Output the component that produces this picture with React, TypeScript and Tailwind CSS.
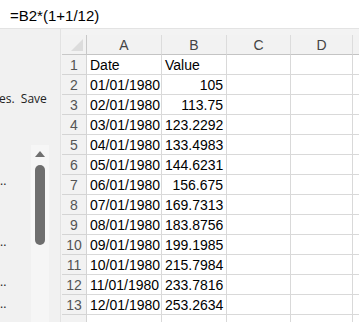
import React from "react";

const rows: [string, string][] = [
  ["01/01/1980", "105"],
  ["02/01/1980", "113.75"],
  ["03/01/1980", "123.2292"],
  ["04/01/1980", "133.4983"],
  ["05/01/1980", "144.6231"],
  ["06/01/1980", "156.675"],
  ["07/01/1980", "169.7313"],
  ["08/01/1980", "183.8756"],
  ["09/01/1980", "199.1985"],
  ["10/01/1980", "215.7984"],
  ["11/01/1980", "233.7816"],
  ["12/01/1980", "253.2634"],
];

const cols = "grid-cols-[25px_75px_65px_64px_62px_1fr]";

function Cell({ children, right }: { children?: React.ReactNode; right?: boolean }) {
  return (
    <div
      className={`h-[20px] border-r border-b border-[#d9d9d9] bg-white text-black text-[14px] leading-[20px] px-[3px] whitespace-nowrap overflow-hidden ${
        right ? "text-right" : "text-left"
      }`}
    >
      {children}
    </div>
  );
}

function RowHead({ n }: { n?: number }) {
  return (
    <div className="h-[20px] border-r border-b border-[#d4d4d4] bg-[#f2f2f2] text-[#555] text-[14px] leading-[20px] text-center">
      {n}
    </div>
  );
}

export default function App() {
  return (
    <div
      className="w-[359px] h-[322px] overflow-hidden bg-[#f3f3f3] flex flex-col"
      style={{ fontFamily: '"Liberation Sans", Arial, sans-serif' }}
    >
      <div className="h-[29px] shrink-0 bg-white border-b border-[#e3e3e3] pl-[10px] pt-[2px] text-[15px] leading-[28px] text-black">
        =B2*(1+1/12)
      </div>
      <div className="flex flex-1 min-h-0">
        <div
          className="relative w-[61px] shrink-0 border-r border-[#e2e2e2] bg-[#f1f1f1] text-[12px] text-[#222]"
          style={{ fontFamily: '"Open Sans", sans-serif' }}
        >
          <div className="absolute left-[31px] top-[116px] w-[18px] bottom-0 bg-[#f6f6f6]" />
          <div className="flex flex-col">
            <div className="mt-[62px] leading-[16px] whitespace-nowrap -ml-[1px]">es.&nbsp; Save</div>
            <div className="mt-[66px] leading-[16px]">..</div>
            <div className="mt-[45px] leading-[16px]">..</div>
            <div className="mt-[24px] leading-[16px]">..</div>
            <div className="mt-[6px] leading-[16px]">..</div>
          </div>
          <div className="absolute left-[35px] top-[122px] w-[10px] flex flex-col items-center">
            <div className="w-0 h-0 border-l-[5px] border-r-[5px] border-b-[6px] border-l-transparent border-r-transparent border-b-[#6f6f6f]" />
            <div className="mt-[8px] w-[10px] h-[80px] rounded-full bg-[#6e6e6e]" />
          </div>
        </div>
        <div className="flex-1 pl-[1px] pt-[6px]">
          <div className={`grid ${cols}`}>
            <div className="relative h-[20px] border-r border-b border-[#c8c8c8] bg-[#f2f2f2]">
              <div
                className="absolute right-[3px] bottom-[3px] w-0 h-0"
                style={{ borderBottom: "12px solid #dcdcdc", borderLeft: "12px solid transparent" }}
              />
            </div>
            {["A", "B", "C", "D", ""].map((c, i) => (
              <div
                key={i}
                className="h-[20px] border-r border-b border-r-[#dcdcdc] border-b-[#c4c4c4] bg-[#f2f2f2] text-[#444] text-[14px] leading-[20px] text-center"
              >
                {c}
              </div>
            ))}
            <RowHead n={1} />
            <Cell>Date</Cell>
            <Cell>Value</Cell>
            <Cell />
            <Cell />
            <Cell />
            {rows.map(([d, v], i) => (
              <React.Fragment key={i}>
                <RowHead n={i + 2} />
                <Cell right>{d}</Cell>
                <Cell right>{v}</Cell>
                <Cell />
                <Cell />
                <Cell />
              </React.Fragment>
            ))}
            <RowHead />
            <Cell />
            <Cell />
            <Cell />
            <Cell />
            <Cell />
          </div>
        </div>
      </div>
    </div>
  );
}
